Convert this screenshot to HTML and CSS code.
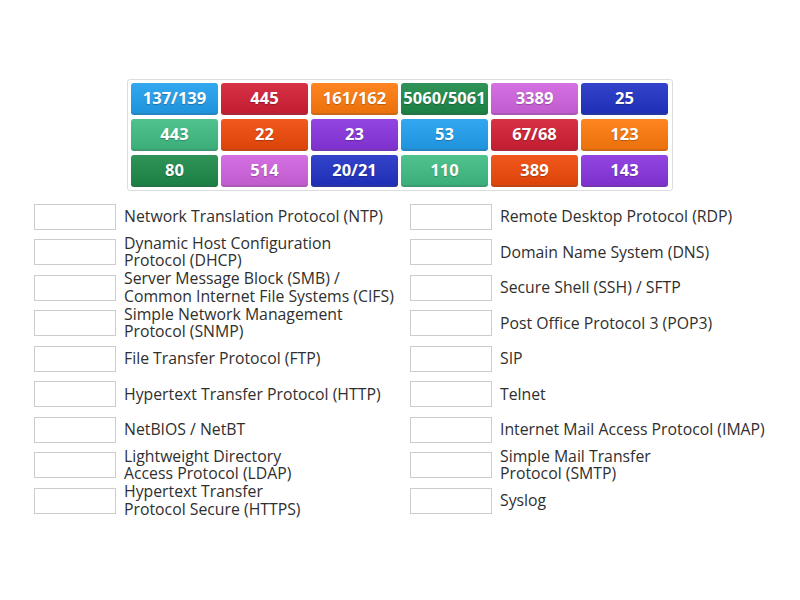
FILE: index.html
```html
<!DOCTYPE html>
<html lang="en">

<head>
    <meta charset="UTF-8">
    <title>Ports and Protocols</title>
    <link rel="stylesheet" href="styles.css">
</head>

<body>
    <!-- port tiles -->
    <div class="board">
        <div class="tile blue">137/139</div>
        <div class="tile red">445</div>
        <div class="tile orange">161/162</div>
        <div class="tile dgreen">5060/5061</div>
        <div class="tile pink">3389</div>
        <div class="tile dblue">25</div>
        <div class="tile green">443</div>
        <div class="tile ored">22</div>
        <div class="tile purple">23</div>
        <div class="tile blue">53</div>
        <div class="tile red">67/68</div>
        <div class="tile orange">123</div>
        <div class="tile dgreen">80</div>
        <div class="tile pink">514</div>
        <div class="tile dblue">20/21</div>
        <div class="tile green">110</div>
        <div class="tile ored">389</div>
        <div class="tile purple">143</div>
    </div>

    <!-- drop targets -->
    <div class="targets">
        <div class="col">
            <div class="row"><div class="slot"></div><div class="label">Network Translation Protocol (NTP)</div></div>
            <div class="row"><div class="slot"></div><div class="label">Dynamic Host Configuration<br>Protocol (DHCP)</div></div>
            <div class="row"><div class="slot"></div><div class="label">Server Message Block (SMB) /<br>Common Internet File Systems (CIFS)</div></div>
            <div class="row"><div class="slot"></div><div class="label">Simple Network Management<br>Protocol (SNMP)</div></div>
            <div class="row"><div class="slot"></div><div class="label">File Transfer Protocol (FTP)</div></div>
            <div class="row"><div class="slot"></div><div class="label">Hypertext Transfer Protocol (HTTP)</div></div>
            <div class="row"><div class="slot"></div><div class="label">NetBIOS / NetBT</div></div>
            <div class="row"><div class="slot"></div><div class="label">Lightweight Directory<br>Access Protocol (LDAP)</div></div>
            <div class="row"><div class="slot"></div><div class="label">Hypertext Transfer<br>Protocol Secure (HTTPS)</div></div>
        </div>
        <div class="col">
            <div class="row"><div class="slot"></div><div class="label">Remote Desktop Protocol (RDP)</div></div>
            <div class="row"><div class="slot"></div><div class="label">Domain Name System (DNS)</div></div>
            <div class="row"><div class="slot"></div><div class="label">Secure Shell (SSH) / SFTP</div></div>
            <div class="row"><div class="slot"></div><div class="label">Post Office Protocol 3 (POP3)</div></div>
            <div class="row"><div class="slot"></div><div class="label">SIP</div></div>
            <div class="row"><div class="slot"></div><div class="label">Telnet</div></div>
            <div class="row"><div class="slot"></div><div class="label">Internet Mail Access Protocol (IMAP)</div></div>
            <div class="row"><div class="slot"></div><div class="label">Simple Mail Transfer<br>Protocol (SMTP)</div></div>
            <div class="row"><div class="slot"></div><div class="label">Syslog</div></div>
        </div>
    </div>
</body>
</html>
```

FILE: styles.css
```css
/* general */
body {
    margin: 0;
    font-family: "Open Sans", Arial, sans-serif;
    background-color: #fff;
    color: #2f2f2f;
}

/* tile board */
.board {
    width: 538px;
    margin: 79px auto 0;
    padding: 3px;
    border: 1px solid #ddd;
    border-radius: 3px;
    display: grid;
    grid-template-columns: repeat(6, 87px);
    column-gap: 3px;
    row-gap: 4px;
}

.tile {
    height: 32px;
    box-sizing: border-box;
    border-radius: 3px;
    border-bottom: 2px solid rgba(0, 0, 0, 0.2);
    color: #fff;
    font-weight: 700;
    font-size: 16.5px;
    line-height: 30px;
    text-align: center;
    white-space: nowrap;
    text-shadow: 0 1px 1px rgba(0, 0, 0, 0.25);
    background-image: linear-gradient(rgba(255, 255, 255, 0.08), rgba(0, 0, 0, 0.08));
}

.blue { background-color: #239ff0; }
.red { background-color: #d41f36; }
.orange { background-color: #ff7b0d; }
.dgreen { background-color: #1e8a4a; }
.pink { background-color: #d064e0; }
.dblue { background-color: #2233c6; }
.green { background-color: #40bd84; }
.ored { background-color: #f04a0a; }
.purple { background-color: #8a35e0; }

/* targets */
.targets {
    display: grid;
    grid-template-columns: 376px 376px;
    padding-left: 34px;
    margin-top: 8px;
}

.row {
    height: 35.5px;
    display: flex;
    align-items: center;
}

.slot {
    width: 82px;
    height: 26px;
    box-sizing: border-box;
    border: 1px solid #ccc;
    background-color: #fff;
    flex-shrink: 0;
}

.label {
    margin-left: 8px;
    font-size: 15.8px;
    line-height: 17.5px;
    white-space: nowrap;
}
```
